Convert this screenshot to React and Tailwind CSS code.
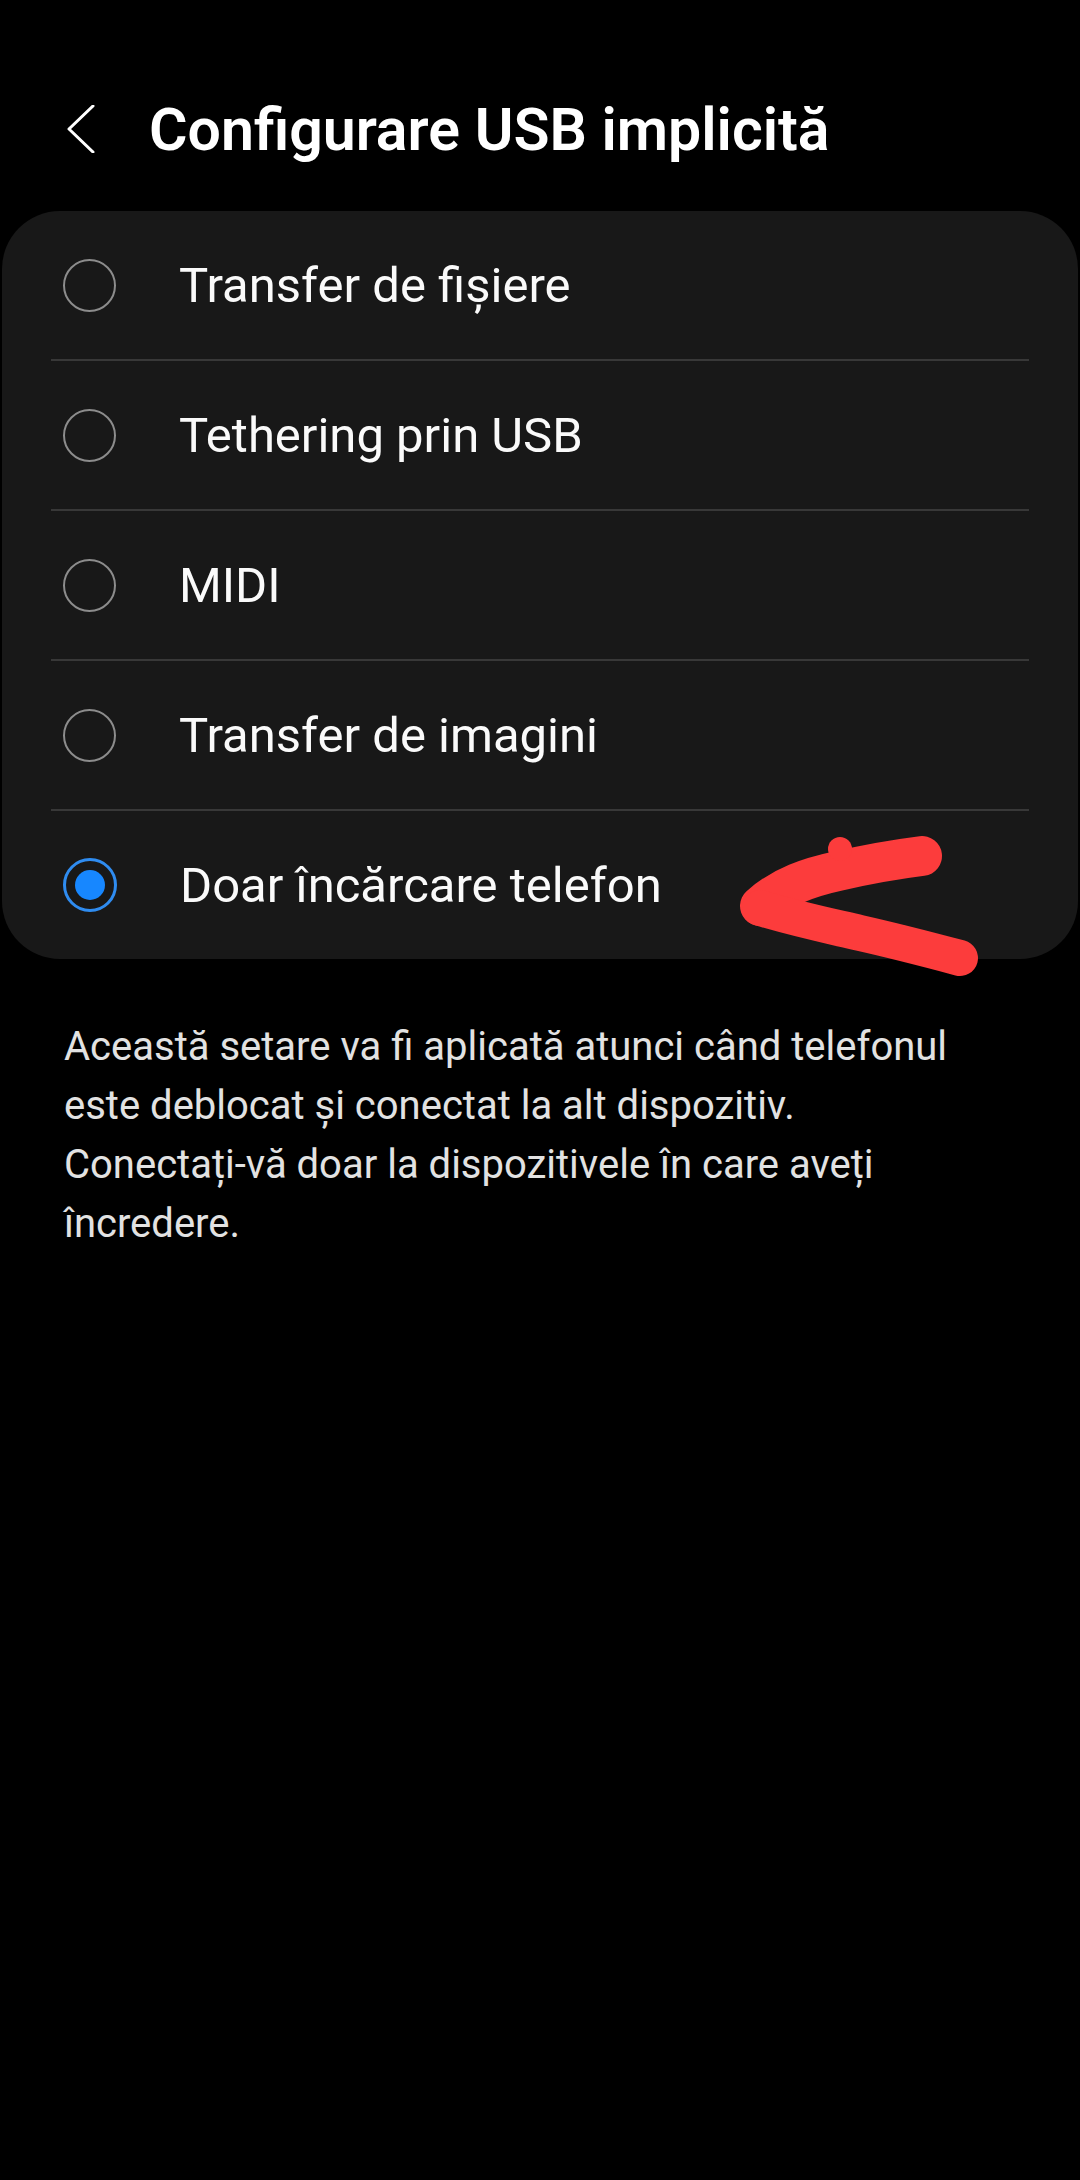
import { useState } from "react";

const options = [
  "Transfer de fișiere",
  "Tethering prin USB",
  "MIDI",
  "Transfer de imagini",
  "Doar încărcare telefon",
];

const Radio = ({ checked }) =>
  checked ? (
    <span className="flex h-[54px] w-[54px] shrink-0 items-center justify-center rounded-full border-[3px] border-[#2f8cf0]">
      <span className="h-[30px] w-[30px] rounded-full bg-[#1787ff]" />
    </span>
  ) : (
    <span className="h-[53px] w-[53px] shrink-0 rounded-full border-[2.5px] border-[#8c8c8c]" />
  );

const Scribble = () => (
  <svg
    className="pointer-events-none absolute left-[720px] top-[820px]"
    width="280"
    height="170"
    viewBox="0 0 280 170"
    fill="none"
  >
    <path
      d="M202 36 C170 40 140 46 118 51 C90 57 62 66 40 86"
      stroke="#fc3c3c"
      strokeWidth="40"
      strokeLinecap="round"
      strokeLinejoin="round"
    />
    <path
      d="M40 88 C80 100 110 106 140 113 C180 122 210 130 240 138"
      stroke="#fc3c3c"
      strokeWidth="36"
      strokeLinecap="round"
    />
    <circle cx="120" cy="29" r="12" fill="#fc3c3c" />
  </svg>
);

export default function App() {
  const [selected, setSelected] = useState(4);

  return (
    <div
      className="relative min-h-[2180px] w-[1080px] bg-black pt-[79px] text-white"
      style={{ fontFamily: "Roboto, 'Noto Sans', sans-serif" }}
    >
      <header className="flex h-[100px] items-center">
        <button className="ml-[66px] flex h-[48px] w-[30px] items-center justify-center">
          <svg width="30" height="48" viewBox="0 0 30 48" fill="none">
            <polyline
              points="27,1 3,24 27,47"
              stroke="#ffffff"
              strokeWidth="3"
              strokeLinecap="round"
              strokeLinejoin="round"
            />
          </svg>
        </button>
        <h1 className="ml-[53px] text-[59px] font-semibold leading-none">
          Configurare USB implicită
        </h1>
      </header>

      <div className="mx-[2px] mt-[32px] rounded-[58px] bg-[#181818] px-[49px]">
        {options.map((label, i) => (
          <button
            key={label}
            onClick={() => setSelected(i)}
            className={
              "flex w-full items-center pl-[12px] text-left " +
              (i > 0 ? "h-[150px] border-t-2 border-[#383838]" : "h-[148px]")
            }
          >
            <Radio checked={selected === i} />
            <span className="ml-[63px] text-[49px] leading-none text-[#fafafa]">
              {label}
            </span>
          </button>
        ))}
      </div>

      <p className="mt-[58px] pl-[64px] pr-[112px] text-[40px] leading-[59px] text-[#e2e2e2]">
        Această setare va fi aplicată atunci când telefonul este deblocat și
        conectat la alt dispozitiv. Conectați-vă doar la dispozitivele în care
        aveți încredere.
      </p>

      <Scribble />
    </div>
  );
}
